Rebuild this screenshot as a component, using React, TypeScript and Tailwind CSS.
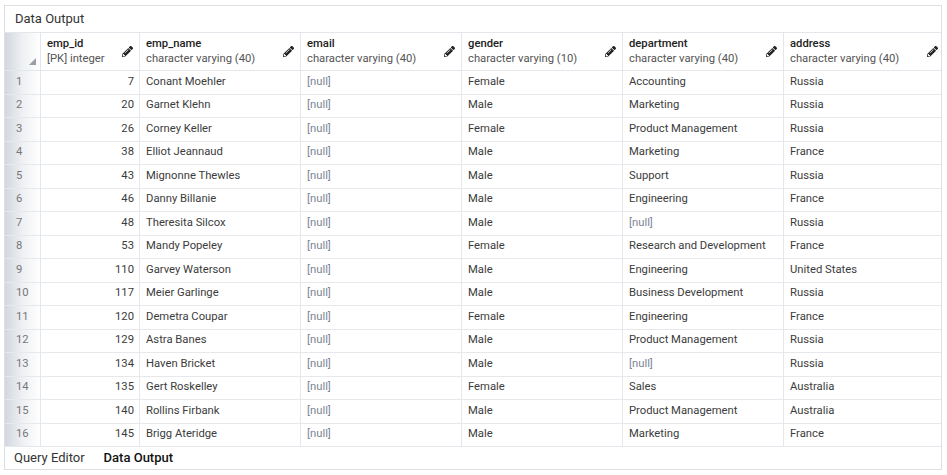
import { FaPencilAlt } from 'react-icons/fa';

type Row = [number, string, string, string, string];

const rows: Row[] = [
  [7, 'Conant Moehler', 'Female', 'Accounting', 'Russia'],
  [20, 'Garnet Klehn', 'Male', 'Marketing', 'Russia'],
  [26, 'Corney Keller', 'Female', 'Product Management', 'Russia'],
  [38, 'Elliot Jeannaud', 'Male', 'Marketing', 'France'],
  [43, 'Mignonne Thewles', 'Male', 'Support', 'Russia'],
  [46, 'Danny Billanie', 'Male', 'Engineering', 'France'],
  [48, 'Theresita Silcox', 'Male', '', 'Russia'],
  [53, 'Mandy Popeley', 'Female', 'Research and Development', 'France'],
  [110, 'Garvey Waterson', 'Male', 'Engineering', 'United States'],
  [117, 'Meier Garlinge', 'Male', 'Business Development', 'Russia'],
  [120, 'Demetra Coupar', 'Female', 'Engineering', 'France'],
  [129, 'Astra Banes', 'Male', 'Product Management', 'Russia'],
  [134, 'Haven Bricket', 'Male', '', 'Russia'],
  [135, 'Gert Roskelley', 'Female', 'Sales', 'Australia'],
  [140, 'Rollins Firbank', 'Male', 'Product Management', 'Australia'],
  [145, 'Brigg Ateridge', 'Male', 'Marketing', 'France'],
];

const columns = [
  { name: 'emp_id', type: '[PK] integer' },
  { name: 'emp_name', type: 'character varying (40)' },
  { name: 'email', type: 'character varying (40)' },
  { name: 'gender', type: 'character varying (10)' },
  { name: 'department', type: 'character varying (40)' },
  { name: 'address', type: 'character varying (40)' },
];

const grid = 'grid grid-cols-[36px_99px_161px_161px_161px_161px_161px]';

function Null() {
  return <span className="text-[#7b8596]">[null]</span>;
}

function Cell({ children, right }: { children: React.ReactNode; right?: boolean }) {
  return (
    <div
      className={`flex items-center border-r border-[#e3e6ea] px-[6px] whitespace-nowrap overflow-hidden ${
        right ? 'justify-end pr-[5px]' : ''
      }`}
    >
      {children}
    </div>
  );
}

export default function App() {
  return (
    <div
      className="w-[947px] h-[475px] bg-white pt-[5px] pl-[4px] text-[#3c3c3c] text-[11.25px]"
      style={{ fontFamily: 'Roboto, "Noto Sans", sans-serif' }}
    >
      <div className="w-[938px] h-[465px] border border-[#dcdfe4] flex flex-col overflow-hidden">
        {/* Title */}
        <div className="h-[26px] shrink-0 flex items-center pl-[10px] text-[13px] text-[#333]">
          Data Output
        </div>

        {/* Grid */}
        <div className="flex-1 overflow-hidden">
          <div className={`${grid} h-[39px] border-t border-b border-[#e3e6ea]`}>
            <div className="relative border-r border-[#e3e6ea] bg-gradient-to-r from-[#d3d7de] via-[#eef0f3] to-white">
              <svg className="absolute right-[4px] bottom-[5px]" width="7" height="7" viewBox="0 0 7 7">
                <polygon points="7,0 7,7 0,7" fill="#9a9ea6" />
              </svg>
            </div>
            {columns.map((c) => (
              <div key={c.name} className="flex items-center justify-between border-r border-[#e3e6ea] pl-[6px] pr-[6px]">
                <div className="leading-[15px] whitespace-nowrap -mt-[2px]">
                  <div className="font-medium text-[#222]">{c.name}</div>
                  <div className="text-[#555]">{c.type}</div>
                </div>
                <FaPencilAlt className="text-[#222] shrink-0" size={11} />
              </div>
            ))}
          </div>

          {rows.map((r, i) => (
            <div key={i} className={`${grid} h-[23.5px] border-b border-[#e6e8ec]`}>
              <div className="flex items-center pl-[11px] text-[#777] border-r border-[#e3e6ea] bg-gradient-to-r from-[#d3d7de] via-[#eef0f3] to-white">
                {i + 1}
              </div>
              <Cell right>{r[0]}</Cell>
              <Cell>{r[1]}</Cell>
              <Cell>
                <Null />
              </Cell>
              <Cell>{r[2]}</Cell>
              <Cell>{r[3] ? r[3] : <Null />}</Cell>
              <Cell>{r[4]}</Cell>
            </div>
          ))}
        </div>

        {/* Tabs */}
        <div className="h-[23px] shrink-0 flex items-center gap-[19px] pl-[9px] text-[13px] border-t border-[#e3e6ea]">
          <span className="text-[#333]">Query Editor</span>
          <span className="font-medium text-[#111]">Data Output</span>
        </div>
      </div>
    </div>
  );
}
